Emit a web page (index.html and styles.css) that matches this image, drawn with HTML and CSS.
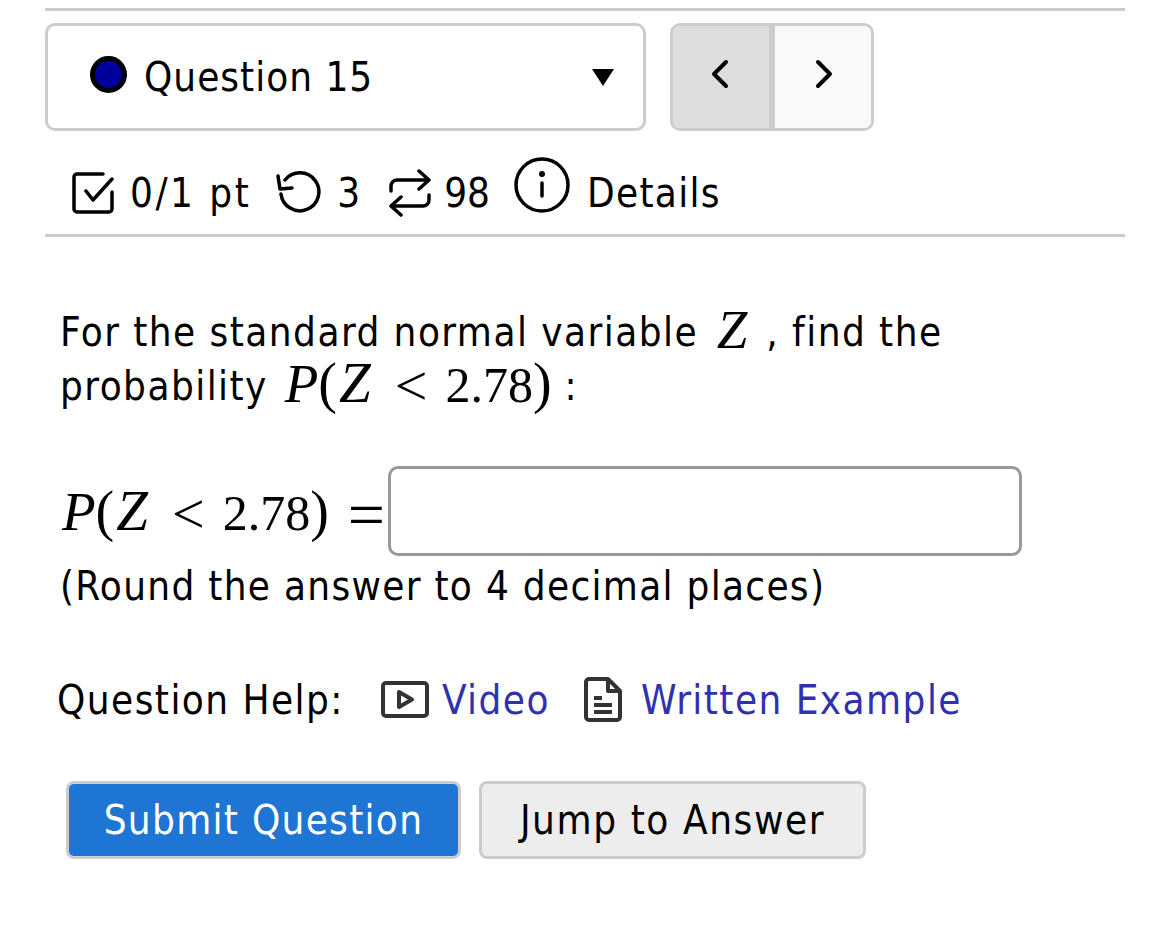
FILE: index.html
```html
<!DOCTYPE html>
<html>
<head>
  <title>Question 15</title>
  <link rel="stylesheet" href="styles.css">
</head>
<body>
  <div class="header">
    <div class="nav-row">
      <div class="question-select">
        <span class="dot"></span>
        <span class="question-name">Question 15</span>
        <span class="caret"></span>
      </div>
      <div class="pager">
        <button class="pager-btn prev">
          <svg width="20" height="32" viewBox="0 0 20 32"><path d="M15 4 L3 16 L15 28" /></svg>
        </button>
        <button class="pager-btn next">
          <svg width="20" height="32" viewBox="0 0 20 32"><path d="M5 4 L17 16 L5 28" /></svg>
        </button>
      </div>
    </div>
    <div class="meta-row">
      <svg class="icon check-icon" width="42" height="42" viewBox="0 0 42 42"><path d="M31 2 H5 a3 3 0 0 0 -3 3 V37 a3 3 0 0 0 3 3 H37 a3 3 0 0 0 3 -3 V20" /><path d="M14 19 L21 28 L40 7" /></svg>
      <span class="meta-text pts">0/1 pt</span>
      <svg class="icon retry-icon" width="46" height="44" viewBox="0 0 46 44"><path d="M10 9 A19 19 0 1 1 6 23" /><path d="M3 5 L5 18 L17 17" /></svg>
      <span class="meta-text tries">3</span>
      <svg class="icon attempts-icon" width="44" height="48" viewBox="0 0 44 48"><path d="M3 22 V17 a6 6 0 0 1 6 -6 H40" /><path d="M31 2 L41 11 L31 20" /><path d="M41 26 V31 a6 6 0 0 1 -6 6 H4" /><path d="M13 28 L3 37 L13 46" /></svg>
      <span class="meta-text views">98</span>
      <svg class="icon info-icon" width="56" height="56" viewBox="0 0 56 56"><circle cx="28" cy="28" r="26" /><path d="M28 26 V39" /><circle class="info-dot" cx="28" cy="17" r="3" /></svg>
      <span class="meta-text details">Details</span>
    </div>
  </div>

  <div class="question">
    <p class="prompt">For the standard normal variable <span class="math var-z"><i>Z</i></span> , find the<br>
    probability <span class="math var-prob"><i>P</i><span class="paren">(</span><i>Z</i><span class="rel">&lt;</span><span class="num">2.78</span><span class="paren">)</span></span> :</p>
    <div class="answer-row">
      <span class="math"><i>P</i><span class="paren">(</span><i>Z</i><span class="rel">&lt;</span><span class="num">2.78</span><span class="paren">)</span><span class="eq">=</span></span>
      <input class="answer" type="text">
    </div>
    <p class="hint">(Round the answer to 4 decimal places)</p>
  </div>

  <div class="help">
    <span class="help-label">Question Help:</span>
    <svg class="help-icon video-icon" width="48" height="38" viewBox="0 0 48 38"><rect x="2" y="2" width="44" height="33" rx="3" /><path d="M18 11 L31 18.500 L18 26 Z" /></svg>
    <a class="help-link video-link" href="#">Video</a>
    <svg class="help-icon doc-icon" width="38" height="46" viewBox="0 0 38 46"><path d="M5 2 H24 L36 14 V40 a3 3 0 0 1 -3 3 H5 a3 3 0 0 1 -3 -3 V5 a3 3 0 0 1 3 -3 Z" /><path d="M24 2 V14 H36" /><path d="M10 21 H18 M10 28 H28 M10 35 H28" /></svg>
    <a class="help-link" href="#">Written Example</a>
  </div>

  <div class="actions">
    <button class="btn primary">Submit Question</button>
    <button class="btn secondary">Jump to Answer</button>
  </div>
</body>
</html>
```

FILE: styles.css
```css
/* Page */
body {
  margin: 0;
  padding: 8px 45px 0;
  background: #fff;
  color: #000;
  font-family: "DejaVu Sans Condensed", "DejaVu Sans", sans-serif;
  font-stretch: condensed;
  font-size: 40px;
  letter-spacing: 1.3px;
}

/* Header block */
.header {
  border-top: 3px solid #ccc;
  border-bottom: 3px solid #ccc;
  height: 223px;
}

.nav-row {
  display: flex;
  gap: 24px;
  margin-top: 12px;
}

.question-select {
  width: 601px;
  height: 108px;
  box-sizing: border-box;
  border: 3px solid #ccc;
  border-radius: 10px;
  display: flex;
  align-items: center;
  padding-left: 42px;
  padding-right: 29px;
}

.dot {
  width: 37px;
  height: 37px;
  box-sizing: border-box;
  border: 5px solid #000;
  border-radius: 50%;
  background: #00009c;
  margin-right: 17px;
  margin-top: -6px;
}

.question-name {
  flex: 1;
  letter-spacing: 1px;
}

.caret {
  width: 0;
  height: 0;
  border-left: 11px solid transparent;
  border-right: 11px solid transparent;
  border-top: 17px solid #000;
}

.pager {
  display: flex;
  width: 204px;
  height: 108px;
  box-sizing: border-box;
  border: 3px solid #ccc;
  border-radius: 10px;
  overflow: hidden;
}

.pager-btn {
  border: none;
  padding: 0 0 4px;
  background: #f9f9f9;
  flex: 1;
}

.pager-btn.prev {
  background: #ddd;
  flex: none;
  width: 102px;
  border-right: 6px solid #ccc;
}

.pager-btn path {
  fill: none;
  stroke: #000;
  stroke-width: 4;
  stroke-linecap: round;
  stroke-linejoin: round;
}

/* Score row */
.meta-row {
  display: flex;
  align-items: center;
  height: 100px;
  padding-left: 27px;
  padding-top: 12px;
}

.icon {
  flex: none;
}

.icon path, .icon circle {
  fill: none;
  stroke: #000;
  stroke-width: 3.5;
  stroke-linecap: round;
  stroke-linejoin: round;
}

.icon circle.info-dot {
  fill: #000;
  stroke: none;
}

.pts { margin-left: 16px; letter-spacing: 2.5px; }
.retry-icon { margin-left: 24px; }
.tries { margin-left: 16px; letter-spacing: 0; }
.attempts-icon { margin-left: 28px; }
.views { margin-left: 12px; letter-spacing: 0; }
.info-icon { margin-left: 24px; margin-top: -17px; }
.details { margin-left: 17px; }

/* Question text */
.question {
  padding-left: 15px;
}

.prompt {
  margin: 68px 0 0;
  line-height: 54px;
  letter-spacing: 1.45px;
}

.math {
  font-family: "Liberation Serif", serif;
  font-stretch: normal;
  font-size: 50px;
  letter-spacing: 0;
}

.prompt .math {
  line-height: 0;
  vertical-align: -2px;
}

.answer-row .math {
  margin-top: 8px;
}

.math i {
  font-size: 55px;
}

.math .paren + i {
  font-size: 57px;
  margin-left: 2px;
}

.var-z {
  margin: 0 6px;
}

.var-prob {
  margin-left: 4px;
}

.paren {
  font-size: 56px;
}

.rel {
  font-size: 58px;
  margin: 0 18px 0 24px;
  vertical-align: -3px;
}

.eq {
  font-size: 66px;
  margin-left: 19px;
  vertical-align: -7px;
}

.answer-row {
  display: flex;
  align-items: center;
  margin-top: 53px;
  padding-left: 2px;
}

.answer {
  width: 634px;
  height: 90px;
  box-sizing: border-box;
  border: 3px solid #999;
  border-radius: 10px;
  margin-left: 3px;
  background: #fff;
}

.hint {
  margin: 3px 0 0;
  line-height: 54px;
}

/* Help links */
.help {
  display: flex;
  align-items: center;
  margin-top: 64px;
  margin-left: 12px;
  letter-spacing: 1.45px;
}

.help-icon path, .help-icon rect {
  fill: none;
  stroke: #333;
  stroke-width: 4;
  stroke-linejoin: round;
}

.video-icon { margin-left: 37px; margin-right: 13px; }
.doc-icon { margin-left: 34px; margin-right: 19px; }

.help-link {
  color: #3131b0;
  text-decoration: none;
}

/* Buttons */
.actions {
  display: flex;
  gap: 18px;
  margin-top: 58px;
  margin-left: 21px;
}

.btn {
  height: 78px;
  padding: 0;
  border: 3px solid #ccc;
  border-radius: 8px;
  background: #ededed;
  color: #000;
  font-family: inherit;
  font-stretch: inherit;
  font-size: 40px;
  letter-spacing: inherit;
}

.btn.primary {
  width: 395px;
  background: #1f75d4;
  color: #fff;
}

.btn.secondary {
  width: 387px;
  letter-spacing: 1.6px;
}
```
